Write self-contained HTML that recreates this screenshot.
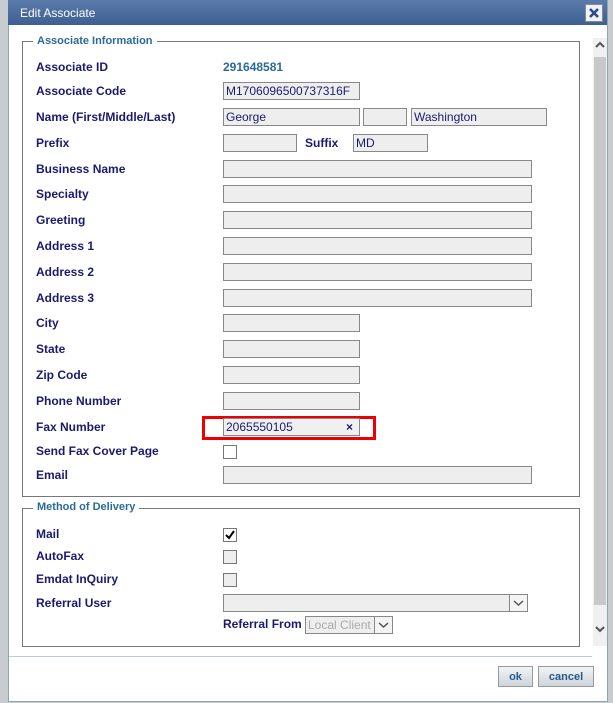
<!DOCTYPE html><html><head><style>
body{margin:0;width:613px;height:703px;background:#c8ccd0;font-family:"Liberation Sans",sans-serif;position:relative;overflow:hidden}
.a{position:absolute}
.dlg{left:8px;top:0;width:598px;height:700px;background:#fff;border:1px solid #8aa}
.tb{left:8px;top:0;width:599px;height:25px;background:linear-gradient(#5a7bab,#3d5f92)}
.lb{position:absolute;left:36px;font-size:12px;font-weight:bold;color:#1a1a6e}
.in{position:absolute;background:#eee;border:1px solid #888;font-size:12px;color:#1a1a6e;line-height:16px;padding-left:2px;box-sizing:border-box;height:18px}
.fs{position:absolute;border:1px solid #777;left:22px;width:556px}
.lg{position:absolute;background:#fff;color:#2a6a9a;font-size:11px;font-weight:bold;padding:0 4px}
.cb{position:absolute;left:223px;width:12px;height:12px;border:1px solid #777;background:#eee}
.btn{position:absolute;top:666px;height:21px;border:1px solid #999;background:linear-gradient(#f2f4f6,#cdd4dc);color:#2a5a8a;font-weight:bold;font-size:11px;text-align:center;line-height:21px;box-sizing:border-box}
</style></head><body>
<div class="a dlg"></div>
<div class="a tb"></div>
<div class="a" style="left:20px;top:6px;color:#fff;font-size:12px">Edit Associate</div>
<div class="a" style="left:585px;top:4px;width:16px;height:16px;background:#f0f2f8;border:1px solid #889"><svg width="16" height="16"><path d="M4 4L12 12M12 4L4 12" stroke="#2a4a8a" stroke-width="2.6"/></svg></div>
<div class="a" style="left:593px;top:38px;width:14px;height:608px;background:#f0f0f0"></div>
<div class="a" style="left:594px;top:57px;width:12px;height:548px;background:#c8c8c8"></div>
<svg class="a" style="left:594px;top:40px" width="12" height="10"><path d="M2 7L6 3L10 7" stroke="#555" stroke-width="2" fill="none"/></svg>
<svg class="a" style="left:594px;top:624px" width="12" height="10"><path d="M2 3L6 7L10 3" stroke="#555" stroke-width="2" fill="none"/></svg>
<div class="fs" style="top:41px;height:454px"></div>
<div class="lg" style="left:33px;top:35px">Associate Information</div>
<div class="lb" style="top:60px">Associate ID</div><div class="a" style="left:223px;top:60px;font-size:12px;font-weight:bold;color:#2a6a9a">291648581</div>
<div class="lb" style="top:84px">Associate Code</div><div class="in" style="left:223px;top:82px;width:137px">M1706096500737316F</div>
<div class="lb" style="top:110px">Name (First/Middle/Last)</div><div class="in" style="left:223px;top:108px;width:137px">George</div><div class="in" style="left:363px;top:108px;width:44px"></div><div class="in" style="left:411px;top:108px;width:136px">Washington</div>
<div class="lb" style="top:136px">Prefix</div><div class="in" style="left:223px;top:134px;width:74px"></div><div class="a" style="left:305px;top:136px;font-size:12px;font-weight:bold;color:#1a1a6e">Suffix</div><div class="in" style="left:353px;top:134px;width:75px">MD</div>
<div class="lb" style="top:162px">Business Name</div><div class="in" style="left:223px;top:160px;width:309px"></div>
<div class="lb" style="top:187px">Specialty</div><div class="in" style="left:223px;top:185px;width:309px"></div>
<div class="lb" style="top:213px">Greeting</div><div class="in" style="left:223px;top:211px;width:309px"></div>
<div class="lb" style="top:239px">Address 1</div><div class="in" style="left:223px;top:237px;width:309px"></div>
<div class="lb" style="top:265px">Address 2</div><div class="in" style="left:223px;top:263px;width:309px"></div>
<div class="lb" style="top:291px">Address 3</div><div class="in" style="left:223px;top:289px;width:309px"></div>
<div class="lb" style="top:316px">City</div><div class="in" style="left:223px;top:314px;width:137px"></div>
<div class="lb" style="top:342px">State</div><div class="in" style="left:223px;top:340px;width:137px"></div>
<div class="lb" style="top:368px">Zip Code</div><div class="in" style="left:223px;top:366px;width:137px"></div>
<div class="lb" style="top:394px">Phone Number</div><div class="in" style="left:223px;top:392px;width:137px"></div>
<div class="lb" style="top:420px">Fax Number</div>
<div class="a" style="left:202px;top:416px;width:168px;height:18px;border:3px solid #e00"></div>
<div class="in" style="left:223px;top:418px;width:137px;background:#f0f0f0">2065550105<span style="position:absolute;left:122px;font-weight:bold">×</span></div>
<div class="lb" style="top:444px">Send Fax Cover Page</div><div class="cb" style="top:445px;background:#fff"></div>
<div class="lb" style="top:468px">Email</div><div class="in" style="left:223px;top:466px;width:309px"></div>
<div class="fs" style="top:508px;height:137px"></div>
<div class="lg" style="left:33px;top:501px">Method of Delivery</div>
<div class="lb" style="top:527px">Mail</div><div class="cb" style="top:528px;background:#fff"><svg width="12" height="12" style="position:absolute;left:0;top:0"><path d="M2 6L5 9L10 2" stroke="#000" stroke-width="2" fill="none"/></svg></div>
<div class="lb" style="top:549px">AutoFax</div><div class="cb" style="top:550px"></div>
<div class="lb" style="top:572px">Emdat InQuiry</div><div class="cb" style="top:573px"></div>
<div class="lb" style="top:596px">Referral User</div><div class="in" style="left:223px;top:594px;width:305px"><span style="position:absolute;right:0;top:0;width:17px;height:16px;border-left:1px solid #888;background:#f4f4f4"><svg width="17" height="16"><path d="M4 6L8.5 10L13 6" stroke="#555" stroke-width="1.5" fill="none"/></svg></span></div>
<div class="a" style="left:223px;top:617px;font-size:12px;font-weight:bold;color:#1a1a6e">Referral From</div>
<div class="in" style="left:305px;top:616px;width:88px;color:#aaa">Local Client<span style="position:absolute;right:0;top:0;width:17px;height:16px;border-left:1px solid #888;background:#f4f4f4"><svg width="17" height="16"><path d="M4 6L8.5 10L13 6" stroke="#555" stroke-width="1.5" fill="none"/></svg></span></div>
<div class="a" style="left:9px;top:656px;width:583px;height:1px;background:#b8cde0"></div>
<div class="btn" style="left:498px;width:35px">ok</div>
<div class="btn" style="left:538px;width:56px">cancel</div>
</body></html>
